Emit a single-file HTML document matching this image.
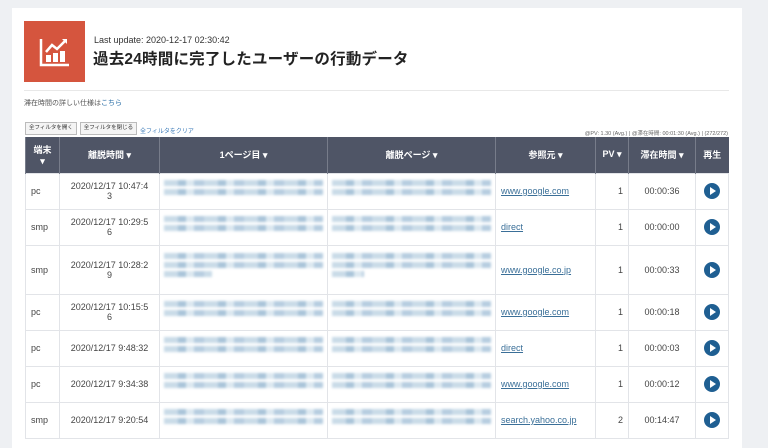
<!DOCTYPE html>
<html><head><meta charset="utf-8"><style>
*{margin:0;padding:0;box-sizing:border-box}
body{width:768px;height:437px;overflow:hidden;background:#eef0f3;font-family:"Liberation Sans","Noto Sans CJK JP",sans-serif;color:#333;position:relative}
.card{position:absolute;left:12px;top:8px;width:730px;height:440px;background:#fff}
.logo{position:absolute;left:24px;top:21px;width:61px;height:61px;background:#d5553e}
.upd{position:absolute;left:94px;top:35px;font-size:9px;color:#333}
h1{position:absolute;left:93px;top:47px;font-size:15.5px;font-weight:bold;color:#222;letter-spacing:0.2px}
.hr{position:absolute;left:24px;top:90px;width:705px;height:1px;background:#e8e8e8}
.spec{position:absolute;left:24px;top:98px;font-size:7px;color:#555}
.spec a{color:#2a6ea6}
.btn{position:absolute;top:122px;height:13px;border:1px solid #bbb;background:#f4f4f4;font-size:5.5px;line-height:11px;padding:0 2px;color:#333;white-space:nowrap;overflow:hidden;text-align:center}
.clr{position:absolute;left:140px;top:126px;font-size:6px;color:#3a7ab8}
.stat{position:absolute;right:40px;top:129px;font-size:5.5px;color:#666}
table{position:absolute;left:25px;top:137px;border-collapse:collapse;table-layout:fixed;width:703px}
th{background:#4f5566;color:#fff;font-size:9px;font-weight:bold;height:36px;border-left:1px solid #777c8a;text-align:center}
td{border:1px solid #e2e4e8;font-size:9px;color:#444;text-align:center;height:36px}
td.l{text-align:left;padding-left:5px}
td.r{text-align:right;padding-right:5px}
td a{color:#3a6f98;text-decoration:underline}
.bl{height:26px;margin:0 4px;position:relative;filter:blur(1.2px)}
.bl i{display:block;height:6px;margin:3px 0;background:repeating-linear-gradient(90deg,#c9dbe8 0 14px,#a9c4d9 14px 22px,#dce8f0 22px 30px,#b6cde0 30px 40px)}
.play{display:inline-block;width:16px;height:16px;border-radius:50%;background:#1f5f92;position:relative;vertical-align:middle}
.play:after{content:"";position:absolute;left:6px;top:4px;border-left:6px solid #fff;border-top:4px solid transparent;border-bottom:4px solid transparent}
</style></head><body>
<div class="card"></div>
<div class="logo"><svg width="61" height="61" viewBox="0 0 61 61"><g fill="none" stroke="#fff" stroke-width="2.5"><path d="M17 18v26h28"/><path d="M22 31l6-7 5 4 8-8"/></g><path d="M38 18h5v5z" fill="#fff"/><rect x="22" y="34" width="5" height="7" fill="#fff"/><rect x="29" y="32" width="5" height="9" fill="#fff"/><rect x="36" y="30" width="5" height="11" fill="#fff"/></svg></div>
<div class="upd">Last update: 2020-12-17 02:30:42</div>
<h1>過去24時間に完了したユーザーの行動データ</h1>
<div class="hr"></div>
<div class="spec">滞在時間の詳しい仕様は<a>こちら</a></div>
<div class="btn" style="left:25px;width:52px">全フィルタを開く</div>
<div class="btn" style="left:80px;width:57px">全フィルタを閉じる</div>
<div class="clr">全フィルタをクリア</div>
<div class="stat">@PV: 1.30 (Avg.) | @滞在時間: 00:01:30 (Avg.) | (272/272)</div>
<table>
<colgroup><col style="width:34px"><col style="width:100px"><col style="width:168px"><col style="width:168px"><col style="width:100px"><col style="width:33px"><col style="width:67px"><col style="width:33px"></colgroup>
<tr><th>端末<br>▾</th><th>離脱時間 ▾</th><th>1ページ目 ▾</th><th>離脱ページ ▾</th><th>参照元 ▾</th><th>PV ▾</th><th>滞在時間 ▾</th><th>再生</th></tr>
<tr><td class="l">pc</td><td>2020/12/17 10:47:4<br>3</td><td><div class="bl"><i></i><i></i></div></td><td><div class="bl"><i></i><i></i></div></td><td class="l"><a>www.google.com</a></td><td class="r">1</td><td>00:00:36</td><td><span class="play"></span></td></tr>
<tr><td class="l">smp</td><td>2020/12/17 10:29:5<br>6</td><td><div class="bl"><i></i><i></i></div></td><td><div class="bl"><i></i><i></i></div></td><td class="l"><a>direct</a></td><td class="r">1</td><td>00:00:00</td><td><span class="play"></span></td></tr>
<tr><td class="l" style="height:49px">smp</td><td>2020/12/17 10:28:2<br>9</td><td><div class="bl" style="height:36px"><i></i><i></i><i style="width:30%"></i></div></td><td><div class="bl" style="height:36px"><i></i><i></i><i style="width:20%"></i></div></td><td class="l"><a>www.google.co.jp</a></td><td class="r">1</td><td>00:00:33</td><td><span class="play"></span></td></tr>
<tr><td class="l">pc</td><td>2020/12/17 10:15:5<br>6</td><td><div class="bl"><i></i><i></i></div></td><td><div class="bl"><i></i><i></i></div></td><td class="l"><a>www.google.com</a></td><td class="r">1</td><td>00:00:18</td><td><span class="play"></span></td></tr>
<tr><td class="l">pc</td><td>2020/12/17 9:48:32</td><td><div class="bl"><i></i><i></i></div></td><td><div class="bl"><i></i><i></i></div></td><td class="l"><a>direct</a></td><td class="r">1</td><td>00:00:03</td><td><span class="play"></span></td></tr>
<tr><td class="l">pc</td><td>2020/12/17 9:34:38</td><td><div class="bl"><i></i><i></i></div></td><td><div class="bl"><i></i><i></i></div></td><td class="l"><a>www.google.com</a></td><td class="r">1</td><td>00:00:12</td><td><span class="play"></span></td></tr>
<tr><td class="l">smp</td><td>2020/12/17 9:20:54</td><td><div class="bl"><i></i><i></i></div></td><td><div class="bl"><i></i><i></i></div></td><td class="l"><a>search.yahoo.co.jp</a></td><td class="r">2</td><td>00:14:47</td><td><span class="play"></span></td></tr>
</table>
</body></html>
